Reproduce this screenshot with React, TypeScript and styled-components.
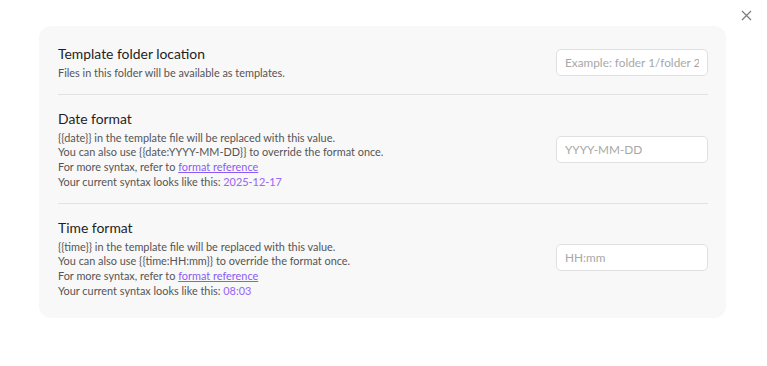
import React from "react";
import styled, { createGlobalStyle } from "styled-components";

const Global = createGlobalStyle`
  html, body { margin: 0; padding: 0; background: #ffffff; }
  body { font-family: "Lato", "Noto Sans", sans-serif; }
`;

const Page = styled.div`
  position: relative;
  width: 767px;
  height: 366px;
  box-sizing: border-box;
  padding: 26px 0 0 39px;
`;

const Close = styled.button`
  position: absolute;
  top: 7px;
  right: 13px;
  width: 16px;
  height: 16px;
  padding: 0;
  border: none;
  background: transparent;
  display: flex;
  align-items: center;
  justify-content: center;
  color: #7a7a7a;
`;

const Card = styled.div`
  width: 687px;
  box-sizing: border-box;
  background: #f8f8f8;
  border-radius: 12px;
  padding: 4.5px 18px 6px 19px;
`;

const Row = styled.div<{ $first?: boolean }>`
  display: flex;
  align-items: center;
  gap: 16px;
  padding: 13.5px 0;
  border-top: ${(p) => (p.$first ? "none" : "1px solid #e2e2e2")};
`;

const Info = styled.div`
  flex: 1;
  min-width: 0;
`;

const Name = styled.div`
  font-size: 13.9px;
  line-height: 20px;
  color: #1e1e1e;
  margin-bottom: 2px;
`;

const Desc = styled.div`
  font-size: 10.9px;
  line-height: 14.7px;
  color: #555555;
`;

const Link = styled.a`
  color: #8a5cf5;
  text-decoration: underline;
`;

const Value = styled.span`
  color: #9b6cf7;
  font-weight: 500;
`;

const Input = styled.input`
  width: 152px;
  height: 27px;
  box-sizing: border-box;
  border: 1px solid #e0e0e0;
  border-radius: 5px;
  background: #ffffff;
  padding: 0 8px;
  font-family: inherit;
  font-size: 11.8px;
  color: #222;
  outline: none;
  &::placeholder { color: #a8a8a8; }
`;

export default function App() {
  return (
    <>
      <Global />
      <Page>
        <Close aria-label="Close">
          <svg width="11" height="11" viewBox="0 0 11 11">
            <path d="M1 1L10 10M10 1L1 10" stroke="currentColor" strokeWidth="1.2" fill="none" />
          </svg>
        </Close>
        <Card>
          <Row $first>
            <Info>
              <Name>Template folder location</Name>
              <Desc>Files in this folder will be available as templates.</Desc>
            </Info>
            <Input placeholder="Example: folder 1/folder 2" />
          </Row>
          <Row>
            <Info>
              <Name>Date format</Name>
              <Desc>
                {"{{date}}"} in the template file will be replaced with this value.
                <br />
                You can also use {"{{date:YYYY-MM-DD}}"} to override the format once.
                <br />
                For more syntax, refer to <Link href="#">format reference</Link>
                <br />
                Your current syntax looks like this: <Value>2025-12-17</Value>
              </Desc>
            </Info>
            <Input placeholder="YYYY-MM-DD" />
          </Row>
          <Row>
            <Info>
              <Name>Time format</Name>
              <Desc>
                {"{{time}}"} in the template file will be replaced with this value.
                <br />
                You can also use {"{{time:HH:mm}}"} to override the format once.
                <br />
                For more syntax, refer to <Link href="#">format reference</Link>
                <br />
                Your current syntax looks like this: <Value>08:03</Value>
              </Desc>
            </Info>
            <Input placeholder="HH:mm" />
          </Row>
        </Card>
      </Page>
    </>
  );
}
